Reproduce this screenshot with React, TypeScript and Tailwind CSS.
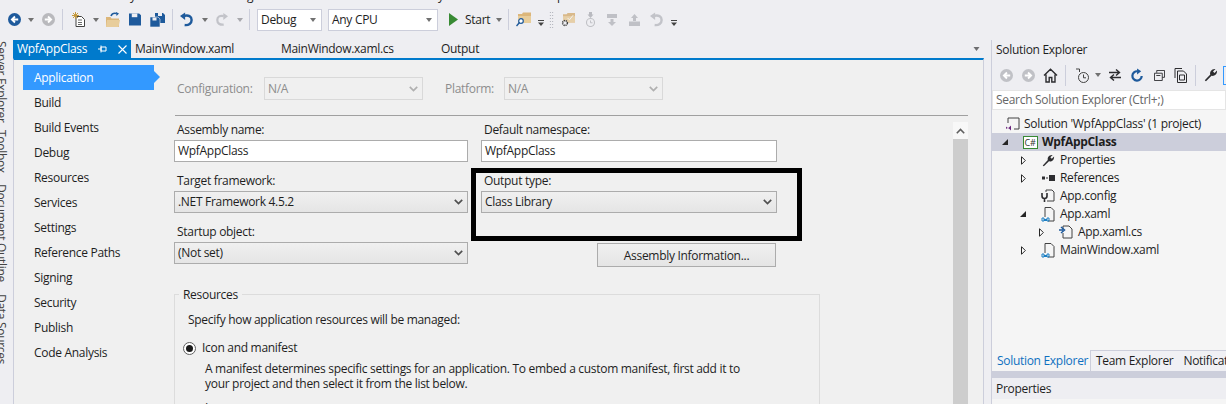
import React from "react";

const G = "#1e5a9c";

function Caret({ c = "#717171", cls = "" }: { c?: string; cls?: string }) {
  return (
    <svg width="6" height="4" viewBox="0 0 6 4" className={`shrink-0 ${cls}`}>
      <path d="M0 0h6L3 4z" fill={c} />
    </svg>
  );
}

function Sep({ cls = "" }: { cls?: string }) {
  return <div className={`w-px h-[21px] bg-[#cccedb] mr-[3px] shrink-0 ${cls}`} />;
}

function CircleArrow({ color, dir, cls = "" }: { color: string; dir: "l" | "r"; cls?: string }) {
  return (
    <svg width="13" height="13" viewBox="0 0 14 14" className={`shrink-0 ${cls}`}>
      <circle cx="7" cy="7" r="7" fill={color} />
      <path d={dir === "l" ? "M11 7H5M7.500 3.800 4.200 7l3.300 3.200" : "M3 7H9M6.500 3.800 9.800 7 6.500 10.200"} stroke="#fff" strokeWidth="2" fill="none" />
    </svg>
  );
}

function Overflow({ cls = "" }: { cls?: string }) {
  return (
    <svg width="6" height="6" viewBox="0 0 6 6" className={`shrink-0 mt-[7px] ${cls}`}>
      <path d="M0 0h6v1H0zM0 2.500h6L3 6z" fill="#444" />
    </svg>
  );
}

function UndoIcon({ color, w = 13, cls = "", flip }: { color: string; w?: number; cls?: string; flip?: boolean }) {
  return (
    <svg width={w} height="15" viewBox="0 0 14 15" className={`shrink-0 ${cls} ${flip ? "-scale-x-100" : ""}`}>
      <path d="M5 13.500c4.500.5 7.500-1.500 7.500-5.500S9 2.500 5 3.500" fill="none" stroke={color} strokeWidth="2.600" />
      <path d="M0 3.800 5.500 0v8z" fill={color} />
    </svg>
  );
}

function Toolbar() {
  return (
    <div className="h-[33px] flex items-center pl-[8px] shrink-0">
      <CircleArrow color={G} dir="l" />
      <Caret cls="ml-[7px]" />
      <CircleArrow color="#b9b9bd" dir="r" cls="ml-[8px]" />
      <Sep cls="ml-[7px]" />
      <svg width="13" height="15" viewBox="0 0 13 15" className="ml-[6px] shrink-0">
        <path d="M4 4.500h5.500l3 3V14.500H4z" fill="#fff" stroke="#424242" />
        <path d="M6 8h4M6 10.500h4M6 12.500h4" stroke="#424242" strokeWidth=".8" />
        <path d="M3.500 0v7M0 3.500h7M1 1l5 5M6 1l-5 5" stroke="#c69a3c" strokeWidth="1" />
      </svg>
      <Caret cls="ml-[8px]" />
      <svg width="14" height="15" viewBox="0 0 14 15" className="ml-[7px] shrink-0">
        <path d="M0 5h4.500l1 1.500H13V15H0z" fill="#dcb67a" />
        <path d="M1 8h13l-1.500 7H0z" fill="#e8cd9b" />
        <path d="M5 4c1-2.500 3.500-3 5.500-2.500" stroke={G} strokeWidth="1.600" fill="none" />
        <path d="M10 0l3 1.500-2.500 2.500z" fill={G} />
      </svg>
      <svg width="12" height="13" viewBox="0 0 13 13" className="ml-[9px] shrink-0">
        <path d="M0 0h11l2 2v11H0z" fill={G} />
        <path d="M3 0h6v4H3z" fill="#eeeef2" />
      </svg>
      <svg width="15" height="14" viewBox="0 0 15 14" className="ml-[9px] shrink-0">
        <path d="M5 0h8l2 2v8H5z" fill={G} />
        <path d="M8 0h4v3H8z" fill="#eeeef2" />
        <path d="M0 4h8l2 2v8H0z" fill={G} stroke="#eeeef2" strokeWidth=".6" />
        <path d="M2.500 4.500h4v3h-4z" fill="#eeeef2" />
      </svg>
      <Sep cls="ml-[7px]" />
      <UndoIcon color={G} cls="ml-[4px]" />
      <Caret cls="ml-[9px]" />
      <UndoIcon color="#c2c3c9" w={12} flip cls="ml-[8px]" />
      <Caret c="#a8a8ad" cls="ml-[9px]" />
      <Sep cls="ml-[6px]" />
      <div className="ml-[4px] w-[65px] h-[22px] bg-white border border-[#cccedb] flex items-center pl-[3px] pr-[5px] justify-between text-[#1e1e1e] shrink-0">
        <span>Debug</span>
        <Caret />
      </div>
      <div className="ml-[6px] w-[110px] h-[22px] bg-white border border-[#cccedb] flex items-center pl-[3px] pr-[5px] justify-between text-[#1e1e1e] shrink-0">
        <span>Any CPU</span>
        <Caret />
      </div>
      <svg width="9" height="13" viewBox="0 0 9 13" className="ml-[11px] shrink-0">
        <path d="M0 0l9 6.500-9 6.500z" fill="#388a34" />
      </svg>
      <span className="ml-[7px] w-[24px] text-[#1e1e1e]">Start</span>
      <Caret cls="ml-[7px]" />
      <Sep cls="ml-[6px]" />
      <div className="relative ml-[4px] w-[15px] h-[15px] shrink-0">
        <svg width="13" height="12" viewBox="0 0 13 12" className="absolute right-0 top-0">
          <path d="M0 2h4l1-1.500h8V11H0z" fill="#dcb67a" />
          <path d="M0 4h13v7H0z" fill="#e8cd9b" />
        </svg>
        <svg width="8" height="9" viewBox="0 0 8 9" className="absolute left-0 bottom-0">
          <circle cx="5" cy="3" r="2.300" fill="#fff" stroke={G} strokeWidth="1.200" />
          <path d="M3.500 4.500 .5 8" stroke={G} strokeWidth="1.400" />
        </svg>
      </div>
      <Overflow cls="ml-[7px]" />
      <div className="ml-[5px] w-[5px] h-[18px] shrink-0 bg-[radial-gradient(#a0a2ac_0.6px,transparent_0.8px)] bg-[length:2.500px_3px]" />
      <div className="relative ml-[7px] w-[14px] h-[15px] shrink-0">
        <svg width="12" height="12" viewBox="0 0 13 12" className="absolute right-0 top-0">
          <path d="M0 2h4l1-1.500h8V11H0z" fill="#d9b98a" />
          <path d="M0 4h13v7H0z" fill="#e6cfa8" />
          <path d="M5 6l2 2 4-5" stroke="#f5f5f5" fill="none" />
        </svg>
        <svg width="8" height="8" viewBox="0 0 8 8" className="absolute left-0 bottom-0">
          <circle cx="4" cy="4" r="2.400" fill="#eeeef2" stroke="#424242" strokeWidth="1.500" strokeDasharray="1.200 .6" />
        </svg>
      </div>
      <svg width="9" height="15" viewBox="0 0 9 15" className="ml-[11px] shrink-0">
        <circle cx="4.500" cy="10.500" r="4" fill="none" stroke="#c0c1c6" strokeWidth="1.100" />
        <path d="M4.500 8.500v2.300h2" stroke="#c0c1c6" fill="none" />
        <path d="M3 0h3v2.500h1.500L4.500 6 1.500 2.500H3z" fill="#b9bac0" />
      </svg>
      <svg width="10" height="12" viewBox="0 0 10 12" className="ml-[12px] shrink-0">
        <path d="M0 0h10v4H0z" fill="#bfc0c6" />
        <path d="M3.500 5h3v3H9L5 12 1 8h2.500z" fill="#bfc0c6" />
      </svg>
      <svg width="11" height="12" viewBox="0 0 11 12" className="ml-[12px] shrink-0">
        <path d="M0 7.500h11V12H0z" fill="#bfc0c6" />
        <path d="M4 7V4H2L5.500 0 9 4H7v3z" fill="#bfc0c6" />
      </svg>
      <UndoIcon color="#c2c3c9" cls="ml-[10px]" />
      <Overflow cls="ml-[8px]" />
    </div>
  );
}

function Tabs() {
  return (
    <div className="h-[18px] flex items-center text-[#1e1e1e] shrink-0">
      <div className="w-[118px] h-full bg-[#007acc] text-white flex items-center pl-[4px] shrink-0">
        <span className="w-[71px]">WpfAppClass</span>
        <svg width="9" height="8" viewBox="0 0 9 8" className="ml-[10px]">
          <path d="M0 4h2.500M3 2h5v4H3zM3 .5v7" stroke="#fff" fill="none" />
        </svg>
        <svg width="9" height="9" viewBox="0 0 9 9" className="ml-[11px]">
          <path d="M.5.5l8 8M8.500.5l-8 8" stroke="#fff" strokeWidth="1.100" />
        </svg>
      </div>
      <span className="ml-[4px] w-[146px] shrink-0">MainWindow.xaml</span>
      <span className="w-[160px] shrink-0">MainWindow.xaml.cs</span>
      <span>Output</span>
      <Caret c="#6d6d70" cls="ml-auto mr-[4px] !w-[7px]" />
    </div>
  );
}

const navItems = ["Build", "Build Events", "Debug", "Resources", "Services", "Settings", "Reference Paths", "Signing", "Security", "Publish", "Code Analysis"];

function Nav() {
  return (
    <div className="w-[161px] shrink-0 pt-[5px] pl-[9px] text-[#1e1e1e]">
      <div className="relative w-[131px] h-[25px] bg-[#3399ff] text-white flex items-center pl-[11px]">
        Application
        <div className="absolute left-full top-[6px] border-y-[6px] border-y-transparent border-l-[6px] border-l-[#3399ff]" />
      </div>
      {navItems.map((n) => (
        <div key={n} className="h-[25px] flex items-center pl-[11px]">{n}</div>
      ))}
    </div>
  );
}

function Chevron({ c = "#505050" }: { c?: string }) {
  return (
    <svg width="9" height="6" viewBox="0 0 9 6" className="shrink-0">
      <path d="M.8.8 4.500 4.500 8.200.8" stroke={c} strokeWidth="1.700" fill="none" />
    </svg>
  );
}

function Select({ value, w, disabled }: { value: string; w: string; disabled?: boolean }) {
  return (
    <div
      className={`${w} border flex items-center justify-between pl-[3px] pr-[4px] shrink-0 ${
        disabled
          ? "h-[23px] border-[#d9d9d9] text-[#8d8d8d]"
          : "h-[22px] border-[#acacac] bg-gradient-to-b from-[#f0f0f0] to-[#e5e5e5] text-[#1e1e1e]"
      }`}
    >
      <span>{value}</span>
      <Chevron c={disabled ? "#b0b0b0" : "#505050"} />
    </div>
  );
}

function Input({ value }: { value: string }) {
  return <div className="h-[22px] bg-white border border-[#acacac] flex items-center pl-[3px] text-[#1e1e1e]">{value}</div>;
}

function Field({ label, children, first }: { label: string; children: React.ReactNode; first?: boolean }) {
  return (
    <div className={first ? "" : "mt-[9px]"}>
      <div className="pl-[3px] h-[20px] flex items-center">{label}</div>
      {children}
    </div>
  );
}

function Form() {
  return (
    <div className="relative flex-1 min-w-0 text-[#1e1e1e]">
      <div className="grid grid-cols-[294px_296px] gap-x-[13px] w-[603px] mt-[4px] ml-[-1px]">
        <Field label="Assembly name:" first><Input value="WpfAppClass" /></Field>
        <Field label="Default namespace:" first><Input value="WpfAppClass" /></Field>
        <Field label="Target framework:"><Select value=".NET Framework 4.5.2" w="w-full" /></Field>
        <Field label="Output type:"><Select value="Class Library" w="w-full" /></Field>
        <Field label="Startup object:"><Select value="(Not set)" w="w-full" /></Field>
        <div className="mt-[9px] flex justify-end pr-[1px]">
          <div className="w-[179px] h-[24px] mt-[21px] border border-[#acacac] bg-gradient-to-b from-[#f0f0f0] to-[#e5e5e5] flex items-center justify-center pt-[1px]">
            Assembly Information...
          </div>
        </div>
      </div>
      <div className="relative w-[646px] h-[200px] border border-[#dcdcdc] mt-[27px] ml-[-1px] px-[13px] pt-[16px]">
        <span className="absolute top-[-9px] left-[4px] px-[4px] bg-[#f0f0f0]">Resources</span>
        <div>Specify how application resources will be managed:</div>
        <div className="flex items-center mt-[10px] ml-[-5px]">
          <div className="w-[13px] h-[13px] rounded-full border border-[#606060] bg-white flex items-center justify-center">
            <div className="w-[7px] h-[7px] rounded-full bg-[#1a1a1a]" />
          </div>
          <span className="ml-[6px]">Icon and manifest</span>
        </div>
        <div className="ml-[17px] mt-[4px] leading-[15px] w-[550px]">
          A manifest determines specific settings for an application. To embed a custom manifest, first add it to your project and then select it from the list below.
        </div>
        <div className="ml-[17px] mt-[8px]">Icon:</div>
      </div>
      <div className="absolute left-[296px] top-[52px] w-[331px] h-[73px] border-[5px] border-black" />
    </div>
  );
}

function Scrollbar() {
  return (
    <div className="w-[15px] shrink-0 flex flex-col mt-[6px] mr-[15px]">
      <div className="h-[17px] shrink-0 flex items-center justify-center bg-[#f8f8f8]">
        <svg width="9" height="6" viewBox="0 0 9 6"><path d="M.8 5.200 4.500 1.500l3.700 3.700" stroke="#606060" strokeWidth="1.600" fill="none" /></svg>
      </div>
      <div className="flex-1 bg-[#cdcdcd]" />
    </div>
  );
}

function Content() {
  return (
    <div className="flex-1 min-h-0 border-t-[2px] border-t-[#007acc] border-x border-x-[#cccedb] flex bg-[#f0f0f0]">
      <Nav />
      <div className="flex-1 min-w-0 flex flex-col">
        <div className="h-[56px] shrink-0 pt-[17px] pl-[2px] border-b border-[#a0a0a0] mr-[15px]">
          <div className="flex items-center text-[#8d8d8d]">
            <span className="w-[87px]">Configuration:</span>
            <Select value="N/A" w="w-[159px]" disabled />
            <span className="ml-[22px] w-[59px]">Platform:</span>
            <Select value="N/A" w="w-[159px]" disabled />
          </div>
        </div>
        <div className="flex-1 min-h-0 flex">
          <Form />
          <Scrollbar />
        </div>
      </div>
    </div>
  );
}

const Tree = ({ arrow, indent, icon, label, bold }: { arrow?: "open" | "closed"; indent: number; icon: React.ReactNode; label: string; bold?: boolean }) => (
  <div className={`h-[18px] flex items-center ${bold ? "bg-[#cccedb] font-bold" : ""}`}>
    <div style={{ width: indent }} className={`shrink-0 flex justify-end ${arrow ? "pr-[14px]" : ""}`}>
      {arrow === "open" && (
        <svg width="6" height="6" viewBox="0 0 6 6"><path d="M6 0v6H0z" fill="#262626" /></svg>
      )}
      {arrow === "closed" && (
        <svg width="5" height="9" viewBox="0 0 5 9"><path d="M.5.700 4.300 4.500.5 8.300z" fill="#fff" stroke="#262626" /></svg>
      )}
    </div>
    <div className="w-[16px] mr-[4px] flex justify-center shrink-0">{icon}</div>
    <span>{label}</span>
  </div>
);

const Wrench = ({ size = 14, cls = "" }: { size?: number; cls?: string }) => (
  <svg width={size} height={size} viewBox="0 0 14 14" className={`shrink-0 ${cls}`}>
    <path d="M1.500 13 0.800 12.300 6.300 6.500C5.500 4 7.500 .5 11.500 1L9 3.500l1.500 1.500L13 2.600c.5 3.800-3 6-5.500 5.200L2 13.300z" fill="#2d2d30" />
  </svg>
);

const FileIcon = () => (
  <svg width="14" height="15" viewBox="0 0 14 15">
    <path d="M4 10V.5h6L13 3.500V14H7" fill="none" stroke="#424242" />
    <path d="M1 11h2v3H1zM6 11h2v3H6z" fill="none" stroke="#1a7fc4" />
    <path d="M3 12h3v2H3z" fill="#1a7fc4" />
  </svg>
);

const Dots = () => <div className="flex-1 ml-[8px] h-[5px] bg-[radial-gradient(#b4b6c2_0.5px,transparent_0.7px)] bg-[length:2px_2px]" />;

function Panel() {
  return (
    <div className="w-[235px] shrink-0 flex flex-col border-l border-[#cccedb] text-[#1e1e1e] bg-[#f5f5f5]">
      <div className="h-[20px] shrink-0 flex items-center pl-[4px] bg-[#eeeef2]">
        <span>Solution Explorer</span>
        <Dots />
      </div>
      <div className="h-[30px] shrink-0 flex items-center pl-[8px] bg-[#eeeef2] overflow-hidden">
        <CircleArrow color="#c0c1c6" dir="l" />
        <CircleArrow color="#c0c1c6" dir="r" cls="ml-[9px]" />
        <svg width="15" height="15" viewBox="0 0 15 15" className="ml-[8px] shrink-0">
          <path d="M1 7.500 7.500 1.200 14 7.500M3 6.500V14h3.200V9.500h2.600V14H12V6.500" fill="none" stroke="#2d2d30" strokeWidth="1.400" />
        </svg>
        <Sep cls="ml-[7px]" />
        <svg width="13" height="15" viewBox="0 0 13 15" className="ml-[7px] shrink-0">
          <circle cx="7.500" cy="9.500" r="5" fill="none" stroke="#424242" />
          <path d="M7.500 6.500v3.300H10M0 1h3.500v3" stroke="#424242" fill="none" />
        </svg>
        <Caret cls="ml-[6px]" />
        <svg width="12" height="12" viewBox="0 0 12 12" className="ml-[8px] shrink-0">
          <path d="M0 3.500h10M7 .5l3.500 3L7 6.500M12 8.500H2M5 5.500l-3.500 3 3.500 3" fill="none" stroke="#2d2d30" strokeWidth="1.400" />
        </svg>
        <svg width="13" height="14" viewBox="0 0 14 14" className="ml-[10px] shrink-0">
          <path d="M11.500 8A5 5 0 1 1 7 3" fill="none" stroke={G} strokeWidth="2.400" />
          <path d="M6.500 0 11 3 6.500 6.500z" fill={G} />
        </svg>
        <svg width="11" height="11" viewBox="0 0 12 12" className="ml-[10px] shrink-0">
          <path d="M3 3V.5h8.500V8H9M.5 3.500H9V11.500H.5zM2.500 6H7" fill="#eeeef2" stroke="#2d2d30" />
        </svg>
        <svg width="15" height="15" viewBox="0 0 14 15" className="ml-[9px] shrink-0">
          <path d="M.5 10V.5h7M3 3h6l3 3v8.500H3z" fill="none" stroke="#2d2d30" />
          <path d="M5 7h5v5H5z" fill="none" stroke="#2d2d30" />
        </svg>
        <Sep cls="ml-[6px]" />
        <Wrench cls="ml-[5px]" />
        <div className="ml-[5px] w-[10px] h-[19px] border border-[#3399ff] border-r-0 bg-[#eeeef2] shrink-0" />
      </div>
      <div className="h-[20px] shrink-0 bg-white border border-[#e5e5e5] flex items-center pl-[3px] text-[#666]">
        Search Solution Explorer (Ctrl+;)
      </div>
      <div className="flex-1 pt-[5px] min-h-0">
        <Tree
          indent={12}
          icon={
            <svg width="15" height="14" viewBox="0 0 15 14">
              <path d="M3 6V1h11v11H9" fill="none" stroke="#424242" />
              <path d="M1 9.500l2 2 3-3v5l-3-3-2 1.500z" fill="#68217a" />
            </svg>
          }
          label="Solution 'WpfAppClass' (1 project)"
        />
        <Tree
          arrow="open"
          bold
          indent={30}
          icon={
            <div className="w-[15px] h-[13px] border border-[#388a34] bg-white text-[9px] leading-[11px] text-center font-normal text-[#333]">C#</div>
          }
          label="WpfAppClass"
        />
        <Tree arrow="closed" indent={48} icon={<Wrench size={13} />} label="Properties" />
        <Tree
          arrow="closed"
          indent={48}
          icon={
            <svg width="13" height="6" viewBox="0 0 13 6"><path d="M0 1.500h3v3H0zM4 2.500h2v1H4zM7 0h6v6H7z" fill="#2d2d30" /></svg>
          }
          label="References"
        />
        <Tree
          indent={48}
          icon={
            <svg width="14" height="14" viewBox="0 0 14 14">
              <path d="M5 3V1h6l2 2v9H6" fill="none" stroke="#424242" />
              <path d="M3.500 13V9M1 4v3a2.500 2.500 0 0 0 5 0V4" fill="none" stroke="#2d2d30" strokeWidth="1.600" />
            </svg>
          }
          label="App.config"
        />
        <Tree arrow="open" indent={48} icon={<FileIcon />} label="App.xaml" />
        <Tree
          arrow="closed"
          indent={66}
          icon={
            <svg width="15" height="14" viewBox="0 0 15 14">
              <path d="M4 4V1h6l3 3v9H4V8" fill="none" stroke="#424242" />
              <path d="M0 5h4M2 2l3.500 3L2 8" fill="none" stroke={G} strokeWidth="1.500" />
            </svg>
          }
          label="App.xaml.cs"
        />
        <Tree arrow="closed" indent={48} icon={<FileIcon />} label="MainWindow.xaml" />
      </div>
      <div className="h-[21px] shrink-0 flex">
        <div className="pl-[5px] w-[98px] shrink-0 text-[#0e70c0] flex items-start pt-[2px]">Solution Explorer</div>
        <div className="flex-1 bg-[#f0f0f4] border-l border-t border-[#cccedb] flex items-center pl-[5px] whitespace-nowrap overflow-hidden">
          <span>Team Explorer</span>
          <span className="ml-[10px]">Notifications</span>
        </div>
      </div>
      <div className="h-[7px] shrink-0 bg-[#cccedb]" />
      <div className="h-[21px] shrink-0 flex items-center pl-[4px] bg-[#eeeef2]">
        <span>Properties</span>
        <Dots />
      </div>
      <div className="h-[5px] shrink-0 bg-[#f5f5f5]" />
    </div>
  );
}

function LeftRail() {
  return (
    <div className="w-[13px] shrink-0 relative overflow-hidden text-[#444] whitespace-nowrap">
      <div className="absolute left-[-8px] top-[1px] [writing-mode:vertical-rl] flex gap-[12px]">
        <span className="mb-[-5px]">Server Explorer</span>
        <span>Toolbox</span>
        <span>Document Outline</span>
        <span>Data Sources</span>
      </div>
    </div>
  );
}

function MenuSliver() {
  return (
    <div className="h-[3px] shrink-0 overflow-hidden text-[#1e1e1e]">
      <div className="flex mt-[-12px] h-[16px] leading-[16px]">
        <span className="ml-[130px] w-[117px]">y</span>
        <span className="w-[191px]">g</span>
        <span className="w-[119px]">y</span>
        <span>p</span>
      </div>
    </div>
  );
}

export default function App() {
  return (
    <div className="w-[1226px] h-[404px] overflow-hidden bg-[#eeeef2] text-[12px] flex flex-col font-['Open_Sans','Noto_Sans',sans-serif] tracking-[-0.3px]">
      <MenuSliver />
      <Toolbar />
      <div className="h-[4px] shrink-0" />
      <div className="flex-1 min-h-0 flex">
        <LeftRail />
        <div className="w-[971px] shrink-0 flex flex-col">
          <Tabs />
          <Content />
        </div>
        <div className="w-[7px] shrink-0" />
        <Panel />
      </div>
    </div>
  );
}
